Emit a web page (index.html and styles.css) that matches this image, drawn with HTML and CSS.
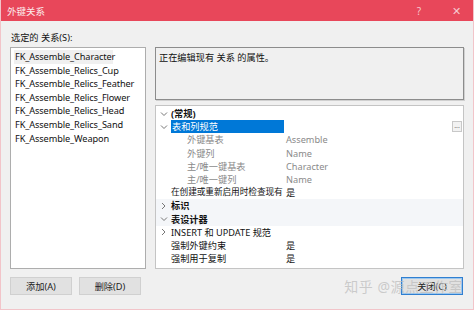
FILE: index.html
```html
<!DOCTYPE html>
<html lang="zh-CN">
<head>
  <meta charset="UTF-8" />
  <title>外键关系</title>
  <link rel="stylesheet" href="styles.css">
</head>
<body>
  <div class="window">
    <div class="titlebar">
      <span class="title">外键关系</span>
      <span class="tb-btn help">?</span>
      <span class="tb-btn close">✕</span>
    </div>

    <div class="content">
      <div class="label">选定的 关系(S):</div>
      <div class="main">
        <div class="list">
          <div class="item sel">FK_Assemble_Character</div>
          <div class="item">FK_Assemble_Relics_Cup</div>
          <div class="item">FK_Assemble_Relics_Feather</div>
          <div class="item">FK_Assemble_Relics_Flower</div>
          <div class="item">FK_Assemble_Relics_Head</div>
          <div class="item">FK_Assemble_Relics_Sand</div>
          <div class="item">FK_Assemble_Weapon</div>
        </div>

        <div class="right">
          <div class="desc">正在编辑现有 关系 的属性。</div>
          <div class="grid">
            <div class="row cat">
              <svg class="chev" viewBox="0 0 8 5"><polyline points="1,1 4,4 7,1"/></svg>
              <span class="name b">(常规)</span>
            </div>
            <div class="row cat">
              <svg class="chev" viewBox="0 0 8 5"><polyline points="1,1 4,4 7,1"/></svg>
              <span class="name hl">表和列规范</span>
              <span class="dots">...</span>
            </div>
            <div class="row sub"><span class="name">外键基表</span><span class="val">Assemble</span></div>
            <div class="row sub"><span class="name">外键列</span><span class="val">Name</span></div>
            <div class="row sub"><span class="name">主/唯一键基表</span><span class="val">Character</span></div>
            <div class="row sub"><span class="name">主/唯一键列</span><span class="val">Name</span></div>
            <div class="row plain"><span class="name tight">在创建或重新启用时检查现有</span><span class="val dark">是</span></div>
            <div class="row cat band">
              <svg class="chev" viewBox="0 0 8 8"><polyline points="2,1 5,4 2,7"/></svg>
              <span class="name b">标识</span>
            </div>
            <div class="row cat band">
              <svg class="chev" viewBox="0 0 8 5"><polyline points="1,1 4,4 7,1"/></svg>
              <span class="name b">表设计器</span>
            </div>
            <div class="row cat">
              <svg class="chev" viewBox="0 0 8 8"><polyline points="2,1 5,4 2,7"/></svg>
              <span class="name">INSERT 和 UPDATE 规范</span>
            </div>
            <div class="row plain"><span class="name">强制外键约束</span><span class="val dark">是</span></div>
            <div class="row plain"><span class="name">强制用于复制</span><span class="val dark">是</span></div>
          </div>
        </div>
      </div>

      <div class="footer">
        <button class="btn">添加(A)</button>
        <button class="btn">删除(D)</button>
        <span class="spacer"></span>
        <button class="btn primary">关闭(C)</button>
        <span class="watermark">知乎 @源点工作室</span>
      </div>
    </div>
  </div>
</body>
</html>
```

FILE: styles.css
```css
* { box-sizing: border-box; }
html, body { margin: 0; }
body {
  width: 474px; height: 310px; overflow: hidden;
  font-family: "Noto Sans", "Noto Sans CJK SC", sans-serif;
  font-size: 9.2px; color: #111;
}
.window {
  width: 474px; height: 310px; background: #f0f0f0;
  border: 1px solid #f2c4c9; border-top: none;
  display: flex; flex-direction: column;
}
.titlebar {
  height: 21px; background: #e8475a; color: #fff;
  display: flex; align-items: center; padding: 0 0 0 6px;
}
.title { flex: 1; font-size: 9.5px; opacity: .9; }
.tb-btn { color: #f6c9cf; text-align: center; }
.help { width: 12px; font-size: 10px; margin-right: 24px; }
.close { width: 14px; font-size: 11px; margin-right: 10px; }

.content { flex: 1; display: flex; flex-direction: column; padding: 10px 9px 0 9px; }
.label { height: 16px; line-height: 14px; padding-left: 1px; }
.main { display: flex; gap: 9px; height: 222px; }

.list {
  width: 136px; background: #fff; border: 1px solid #adadad;
  padding: 2px 0 0 3px;
}
.item { height: 13.6px; line-height: 13.6px; padding-left: 1px; white-space: nowrap; letter-spacing: -0.1px; }
.item.sel { background: #f0f0f0; width: 99px; }

.right { flex: 1; display: flex; flex-direction: column; gap: 5px; }
.desc {
  height: 53px; border: 1px solid #8c8c8c; background: #f0f0f0;
  box-shadow: 1px 1px 0 #d0d0d0; padding: 2px 3px;
}
.grid {
  flex: 1; background: #fff; border: 1px solid #c4c4c4;
  padding: 1px 0 0 0; position: relative;
}
.row { height: 13.2px; line-height: 13.2px; display: flex; align-items: center; white-space: nowrap; }
.chev {
  width: 8px; height: 8px; margin: 0 3px 0 4px; flex: none;
  fill: none; stroke: #777; stroke-width: 1;
}
.name { width: 115px; flex: none; }
.row.sub .name { margin-left: 31px; width: 99px; color: #8a8a8a; }
.row.plain .name { margin-left: 15px; }
.row.cat .name { width: auto; }
.tight { font-size: 8.7px; letter-spacing: -0.1px; }
.b { font-weight: bold; }
.hl { background: #0078d7; color: #fff; width: 113px !important; padding-left: 1px; }
.val { color: #8a8a8a; }
.val.dark { color: #222; }
.band { background: #f4f6f9; }
.dots {
  position: absolute; right: 1px; top: 15px; width: 10px; height: 11px;
  border: 1px solid #c8c8c8; background: #f2f2f2; color: #777;
  font-size: 7px; line-height: 8px; text-align: center;
}

.footer { display: flex; gap: 7px; margin-top: 8px; position: relative; }
.btn {
  width: 62px; height: 18px; border: 1px solid #d0d0d0; background: #e1e1e1;
  font: inherit; color: #222; padding: 0;
}
.spacer { flex: 1; }
.primary { border: 1px solid #2f7fd1; box-shadow: inset 0 0 0 1px #9cc7ee; margin-right: 1px; }
.watermark {
  position: absolute; right: 1px; top: -1px;
  font-size: 14px; color: rgba(190, 190, 190, .75); letter-spacing: 0.5px;
  pointer-events: none;
}
```
